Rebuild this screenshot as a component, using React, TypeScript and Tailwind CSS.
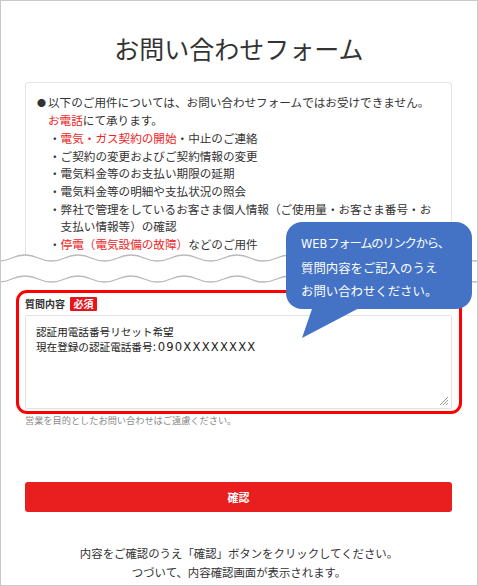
import type { ReactNode } from 'react';

const JP = "font-['Noto_Sans_CJK_JP','Noto_Sans',sans-serif]";

function wavePath(y: number) {
  // half-period 26.5px, amplitude ~3px, first half dips downward
  let d = `M-15.75 ${y}`;
  let x = -15.75;
  let down = true;
  while (x < 500) {
    d += ` Q${(x + 13.25).toFixed(2)} ${down ? y + 6 : y - 6} ${(x + 26.5).toFixed(2)} ${y}`;
    x += 26.5;
    down = !down;
  }
  return d;
}

function Red({ children }: { children: ReactNode }) {
  return <span className="text-[#ee2424]">{children}</span>;
}

function Item({ children }: { children: ReactNode }) {
  return (
    <div className="flex">
      <span className="w-[11.6px] shrink-0">・</span>
      <div>{children}</div>
    </div>
  );
}

function TornEdge() {
  const w1 = wavePath(10);
  const w2 = wavePath(31);
  return (
    <svg width="476" height="36" className="relative -mt-[14px] block" viewBox="0 0 476 36">
      <path d={`${w1} L500 36 L-20 36 Z`} fill="#ffffff" />
      <path d={w1} fill="none" stroke="#b9b9b9" strokeWidth="1.3" />
      <path d={w2} fill="none" stroke="#b9b9b9" strokeWidth="1.3" />
    </svg>
  );
}

export default function App() {
  return (
    <div className={`relative h-[586px] w-[478px] overflow-hidden border border-[#c8c8c8] bg-white text-[#333333] ${JP}`}>
      <h1 className="pt-[31px] text-center text-[25px] font-normal leading-[32px] text-[#333333]">
        お問い合わせフォーム
      </h1>

      <div className="ml-[24px] mt-[18px] h-[180px] w-[427px] overflow-hidden rounded-t-[4px] border border-b-0 border-[#e4e4e4] pl-[11px] pt-[11px] text-[11.6px] leading-[17.6px] whitespace-nowrap">
        <div className="flex">
          <span className="w-[11px] shrink-0 text-[9px] leading-[17.6px]">●</span>
          <div>
            以下のご用件については、お問い合わせフォームではお受けできません。
            <br />
            <Red>お電話</Red>にて承ります。
            <div className="ml-[1px] mt-[1px]">
              <Item>
                <Red>電気・ガス契約の開始</Red>・中止のご連絡
              </Item>
              <Item>ご契約の変更およびご契約情報の変更</Item>
              <Item>電気料金等のお支払い期限の延期</Item>
              <Item>電気料金等の明細や支払状況の照会</Item>
              <Item>
                弊社で管理をしているお客さま個人情報（ご使用量・お客さま番号・お
                <br />
                支払い情報等）の確認
              </Item>
              <Item>
                <Red>停電（電気設備の故障）</Red>などのご用件
              </Item>
            </div>
          </div>
        </div>
      </div>

      <TornEdge />

      <div className="ml-[15px] mt-[6px] w-[446px] rounded-[11px] border-[3px] border-[#ff0000] pb-[2px] pl-[6px] pt-[4px]">
        <div className="flex h-[14px] items-center gap-[5px]">
          <span className="text-[10px] font-bold leading-[14px] text-[#333333]">質問内容</span>
          <span className="flex h-[14px] w-[27px] items-center justify-center rounded-[1px] bg-[#e8141c] text-[10px] font-bold leading-none text-white">
            必須
          </span>
        </div>
        <div className="relative mt-[4px] h-[94px] w-[427px] rounded-[2px] border border-[#e2e2e2] pl-[10px] pt-[9px] text-[10.6px] leading-[14.5px] text-[#222222]">
          <div>認証用電話番号リセット希望</div>
          <div>
            現在登録の認証電話番号
            <span className="font-['DejaVu_Sans',sans-serif] text-[11.6px] tracking-[1.2px]">:090XXXXXXXX</span>
          </div>
          <svg className="absolute bottom-[2px] right-[2px]" width="10" height="10" viewBox="0 0 10 10">
            <path d="M9 1 L1 9 M9 4 L4 9 M9 7 L7 9" stroke="#9a9a9a" strokeWidth="1" />
          </svg>
        </div>
      </div>

      <p className="pl-[24px] text-[9.2px] leading-[12px] text-[#8a8a8a]">
        営業を目的としたお問い合わせはご遠慮ください。
      </p>

      <button
        type="button"
        className="ml-[24px] mt-[56px] flex h-[30px] w-[427px] items-center justify-center rounded-[3px] bg-[#e91f1f] text-[11px] font-bold text-white"
      >
        確認
      </button>

      <p className="mt-[31.6px] text-center text-[11.4px] leading-[19.4px] text-[#333333]">
        内容をご確認のうえ「確認」ボタンをクリックしてください。
        <br />
        つづいて、内容確認画面が表示されます。
      </p>

      {/* callout */}
      <svg className="absolute left-[299px] top-[299px]" width="70" height="42" viewBox="0 0 70 42">
        <polygon points="13,6 63,6 2,38" fill="#4472c4" />
      </svg>
      <div className="absolute left-[285px] top-[221px] h-[87px] w-[186px] rounded-[16px] bg-[#4472c4] pl-[15px] pt-[10px] text-[12.4px] leading-[23.5px] text-white whitespace-nowrap">
        <div>
          <span className="font-['DejaVu_Sans',sans-serif] text-[11.4px]">WEB</span>
          <span className="tracking-[-1.3px]">フォームのリンクから、</span>
        </div>
        <div>質問内容をご記入のうえ</div>
        <div>お問い合わせください。</div>
      </div>
    </div>
  );
}
